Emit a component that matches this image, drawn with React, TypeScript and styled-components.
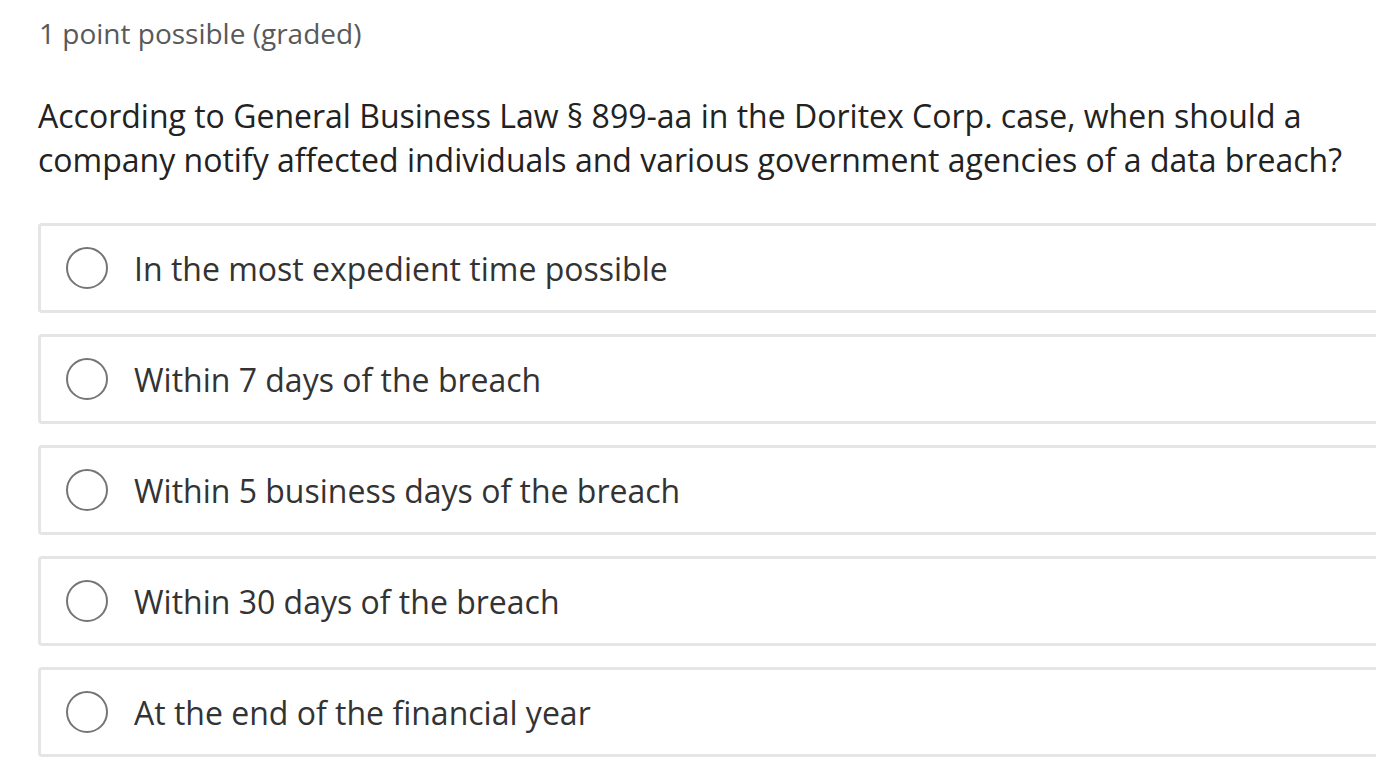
import React from "react";
import styled, { createGlobalStyle } from "styled-components";

const Global = createGlobalStyle`
  html, body { margin: 0; padding: 0; background: #fff; overflow: hidden; }
  body { font-family: "Open Sans", "Noto Sans", sans-serif; }
`;

const Page = styled.div`
  padding: 14px 0 0 38px;
  width: 1400px;
`;

const Meta = styled.div`
  font-size: 28px;
  line-height: 38px;
  color: #595959;
  padding-left: 1px;
`;

const Question = styled.p`
  margin: 42px 0 0 0;
  font-size: 32px;
  line-height: 44px;
  color: #222;
`;

const Options = styled.div`
  margin-top: 41px;
  display: flex;
  flex-direction: column;
  gap: 21px;
`;

const Option = styled.label`
  display: flex;
  align-items: center;
  gap: 26px;
  height: 84px;
  padding-left: 25px;
  border: 3px solid #e5e5e5;
  border-radius: 4px;
  box-sizing: content-box;
  font-size: 32px;
  color: #333;
  cursor: pointer;
`;

const Radio = styled.span`
  width: 38px;
  height: 38px;
  border: 2.5px solid #757575;
  border-radius: 50%;
  flex: none;
`;

const options = [
  "In the most expedient time possible",
  "Within 7 days of the breach",
  "Within 5 business days of the breach",
  "Within 30 days of the breach",
  "At the end of the financial year",
];

export default function App() {
  return (
    <>
      <Global />
      <Page>
        <Meta>1 point possible (graded)</Meta>
        <Question>
          According to General Business Law § 899-aa in the Doritex Corp. case, when should a
          <br />
          company notify affected individuals and various government agencies of a data breach?
        </Question>
        <Options>
          {options.map((o) => (
            <Option key={o}>
              <Radio />
              <span>{o}</span>
            </Option>
          ))}
        </Options>
      </Page>
    </>
  );
}
